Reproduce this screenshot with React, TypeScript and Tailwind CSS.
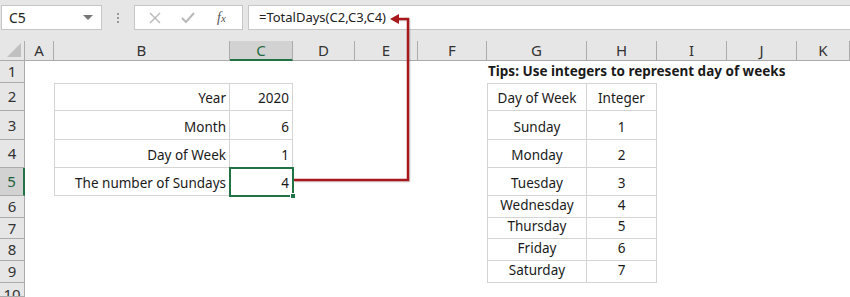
import React from 'react';

const cols = [
  { id: 'A', w: 29 },
  { id: 'B', w: 176 },
  { id: 'C', w: 63 },
  { id: 'D', w: 62 },
  { id: 'E', w: 63 },
  { id: 'F', w: 69 },
  { id: 'G', w: 100 },
  { id: 'H', w: 70 },
  { id: 'I', w: 70 },
  { id: 'J', w: 70 },
  { id: 'K', w: 53 },
];

const rowHeights = [22, 28, 29, 28, 28, 22, 21, 22, 22, 14];

type Cell = { text?: string; align?: 'left' | 'right' | 'center'; bold?: boolean; box?: string };

const left: Record<number, [string, string]> = {
  2: ['Year', '2020'],
  3: ['Month', '6'],
  4: ['Day of Week', '1'],
  5: ['The number of Sundays', '4'],
};

const days: [string, string][] = [
  ['Day of Week', 'Integer'],
  ['Sunday', '1'],
  ['Monday', '2'],
  ['Tuesday', '3'],
  ['Wednesday', '4'],
  ['Thursday', '5'],
  ['Friday', '6'],
  ['Saturday', '7'],
];

function cellFor(row: number, col: string): Cell {
  if (row >= 2 && row <= 5 && col === 'B')
    return { text: left[row][0], align: 'right', box: 'border-r border-b border-l border-[#d4d4d4]' + (row === 2 ? ' border-t' : '') };
  if (row >= 2 && row <= 5 && col === 'C')
    return { text: left[row][1], align: 'right', box: 'border-r border-b border-[#d4d4d4]' + (row === 2 ? ' border-t' : '') };
  if (row === 1 && col === 'G') return { text: 'Tips: Use integers to represent day of weeks', bold: true, align: 'left' };
  if (row >= 2 && row <= 9 && col === 'G')
    return { text: days[row - 2][0], align: 'center', box: 'border-r border-b border-l border-[#d4d4d4]' + (row === 2 ? ' border-t' : '') };
  if (row >= 2 && row <= 9 && col === 'H')
    return { text: days[row - 2][1], align: 'center', box: 'border-r border-b border-[#d4d4d4]' + (row === 2 ? ' border-t' : '') };
  return {};
}

export default function App() {
  const gridCols = `25px ${cols.map((c) => c.w + 'px').join(' ')}`;
  return (
    <div className="relative w-[850px] h-[297px] overflow-hidden bg-white text-[#222]" style={{ fontFamily: '"Noto Sans", "Liberation Sans", sans-serif' }}>
      {/* toolbar */}
      <div className="h-[41px] bg-[#e6e6e6] flex items-start pt-[5px] pl-px">
        <div className="w-[101px] h-[25px] bg-white border border-[#c6c6c6] flex items-center justify-between pl-[7px] pr-[8px] text-[14px]">
          <span>C5</span>
          <span className="w-0 h-0 border-l-[5px] border-r-[5px] border-t-[5px] border-l-transparent border-r-transparent border-t-[#777]" />
        </div>
        <div className="w-[32px] h-[25px] flex flex-col items-center justify-center gap-[2px]">
          <span className="w-[2px] h-[2px] bg-[#999]" />
          <span className="w-[2px] h-[2px] bg-[#999]" />
          <span className="w-[2px] h-[2px] bg-[#999]" />
        </div>
        <div className="w-[109px] h-[25px] bg-white border border-[#c6c6c6] flex items-center">
          <svg width="12" height="12" viewBox="0 0 12 12" className="ml-[14px]">
            <path d="M1 1 L11 11 M11 1 L1 11" stroke="#b8b8b8" strokeWidth="1.4" />
          </svg>
          <svg width="14" height="12" viewBox="0 0 14 12" className="ml-[20px]">
            <path d="M1 6 L5 10 L13 1" stroke="#b8b8b8" strokeWidth="2" fill="none" />
          </svg>
          <span className="ml-[22px] text-[14px] italic text-[#555]" style={{ fontFamily: '"Liberation Serif", serif' }}>
            f<span className="text-[11px]">x</span>
          </span>
        </div>
        <div className="ml-[5px] flex-1 h-[25px] bg-white border border-[#c6c6c6] border-r-0 flex items-center pl-[10px] text-[13px]">
          =TotalDays(C2,C3,C4)
        </div>
      </div>

      {/* sheet grid */}
      <div className="grid" style={{ gridTemplateColumns: gridCols, gridTemplateRows: `20px ${rowHeights.map((h) => h + 'px').join(' ')}` }}>
        {/* corner */}
        <div className="bg-[#e6e6e6] border-r border-b border-[#ababab] flex items-end justify-end pr-[3px] pb-[3px]">
          <span className="w-0 h-0 border-l-[14px] border-b-[14px] border-l-transparent border-b-[#c0c0c0]" />
        </div>
        {cols.map((c) =>
          c.id === 'C' ? (
            <div key={c.id} className="bg-[#d2d2d2] border-r border-[#ababab] border-b-2 border-b-[#217346] flex items-center justify-center text-[15px] text-[#1e6b41]">
              {c.id}
            </div>
          ) : (
            <div key={c.id} className="bg-[#e6e6e6] border-r border-b border-[#ababab] flex items-center justify-center text-[15px] text-[#333]">
              {c.id}
            </div>
          )
        )}
        {rowHeights.map((h, i) => {
          const row = i + 1;
          const last = row === 10;
          return (
            <React.Fragment key={row}>
              {row === 5 ? (
                <div className="bg-[#d2d2d2] border-r-2 border-r-[#217346] border-b border-b-[#ababab] flex items-center justify-center text-[15px] text-[#1e5e3a]">
                  {row}
                </div>
              ) : (
                <div className={`bg-[#e6e6e6] border-r border-b border-[#ababab] flex justify-center text-[15px] text-[#333] overflow-hidden ${last ? 'items-start pt-[2px] leading-[18px]' : 'items-center'}`}>
                  {row}
                </div>
              )}
              {cols.map((c) => {
                const cell = cellFor(row, c.id);
                const just = cell.align === 'right' ? 'justify-end pr-[3px]' : cell.align === 'center' ? 'justify-center' : 'justify-start pl-[1px]';
                return (
                  <div
                    key={c.id}
                    className={`flex items-end pb-[2px] whitespace-nowrap overflow-visible text-[13.5px] text-[#1a1a1a] ${just} ${cell.box ?? ''} ${cell.bold ? 'font-bold' : ''}`}
                  >
                    {cell.text}
                  </div>
                );
              })}
            </React.Fragment>
          );
        })}
      </div>

      {/* active cell C5 */}
      <div className="absolute left-[229px] top-[167px] w-[65px] h-[30px] border-2 border-[#217346]">
        <div className="absolute -right-[4px] -bottom-[4px] w-[6px] h-[6px] bg-[#217346] border border-white" />
      </div>

      {/* arrow */}
      <svg className="absolute left-0 top-0 pointer-events-none" width="850" height="297">
        <path d="M295 181 H409 V20 H398" stroke="#00000022" strokeWidth="3" fill="none" />
        <path d="M294 180 H408 V19 H397" stroke="#a8171b" strokeWidth="2.5" fill="none" />
        <path d="M390 19 L399 14 L399 24 Z" fill="#a8171b" />
      </svg>
    </div>
  );
}
